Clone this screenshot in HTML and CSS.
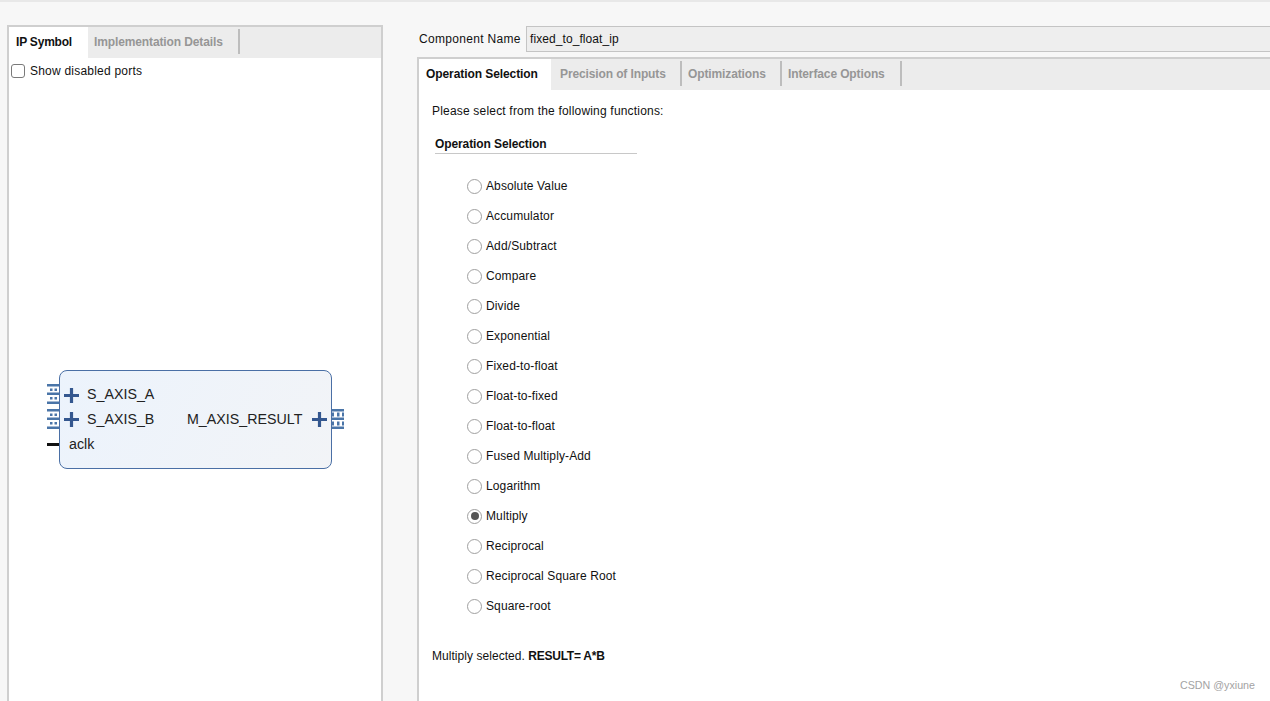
FILE: index.html
```html
<!DOCTYPE html>
<html lang="en">
<head>
<meta charset="utf-8">
<title>Customize IP</title>
<link rel="stylesheet" href="styles.css">
</head>
<body>
<div class="app">
  <section class="left-panel">
    <div class="tabbar left-tabbar">
      <div class="tab active first">IP Symbol</div>
      <div class="tab impl">Implementation Details</div>
    </div>
    <div class="left-body">
      <label class="check-row"><span class="checkbox"></span>Show disabled ports</label>
      <div class="canvas">
        <div class="port-icon bus a"><svg width="12" height="20" viewBox="0 0 12 20"><use href="#bus-left"/></svg></div>
        <div class="port-icon bus b"><svg width="12" height="20" viewBox="0 0 12 20"><use href="#bus-left"/></svg></div>
        <div class="clk-line"></div>
        <div class="block"></div>
        <svg class="plus p1" width="15" height="15" viewBox="0 0 16 16"><use href="#plus"/></svg>
        <svg class="plus p2" width="15" height="15" viewBox="0 0 16 16"><use href="#plus"/></svg>
        <svg class="plus p3" width="15" height="15" viewBox="0 0 16 16"><use href="#plus"/></svg>
        <span class="sig s1">S_AXIS_A</span>
        <span class="sig s2">S_AXIS_B</span>
        <span class="sig s3">aclk</span>
        <span class="sig s4">M_AXIS_RESULT</span>
        <div class="port-icon bus c"><svg width="12" height="20" viewBox="0 0 12 20"><use href="#bus-right"/></svg></div>
      </div>
    </div>
  </section>
  <main class="right">
    <div class="name-row">
      <span class="name-label">Component Name</span>
      <div class="name-input">fixed_to_float_ip</div>
    </div>
    <section class="right-panel">
      <div class="tabbar right-tabbar">
        <div class="tab active op">Operation Selection</div>
        <div class="tab prec">Precision of Inputs</div>
        <div class="tab opt">Optimizations</div>
        <div class="tab intf">Interface Options</div>
      </div>
      <div class="right-body">
        <p class="intro">Please select from the following functions:</p>
        <h2 class="group-title">Operation Selection</h2>
        <ul class="radios">
          <li><span class="radio"></span>Absolute Value</li>
          <li><span class="radio"></span>Accumulator</li>
          <li><span class="radio"></span>Add/Subtract</li>
          <li><span class="radio"></span>Compare</li>
          <li><span class="radio"></span>Divide</li>
          <li><span class="radio"></span>Exponential</li>
          <li><span class="radio"></span>Fixed-to-float</li>
          <li><span class="radio"></span>Float-to-fixed</li>
          <li><span class="radio"></span>Float-to-float</li>
          <li><span class="radio"></span>Fused Multiply-Add</li>
          <li><span class="radio"></span>Logarithm</li>
          <li><span class="radio on"></span>Multiply</li>
          <li><span class="radio"></span>Reciprocal</li>
          <li><span class="radio"></span>Reciprocal Square Root</li>
          <li><span class="radio"></span>Square-root</li>
        </ul>
        <p class="result">Multiply selected. <b>RESULT= A*B</b></p>
      </div>
    </section>
  </main>
</div>
<div class="watermark">CSDN @yxiune</div>
<svg class="defs" width="0" height="0">
  <defs>
    <g id="bus-left" fill="#4a75a8">
      <path d="M0 0h12v2.500H0zM0 8.500h12v2.500H0zM0 17.500h12v2.500H0z"/>
      <path d="M3 4.500h2.500v2.500H3zM7.500 4.500h2.500v2.500H7.500zM3 13h2.500v2.500H3zM7.500 13h2.500v2.500H7.500z"/>
    </g>
    <g id="bus-right" fill="#4a75a8">
      <path d="M0 0h12v2.500H0zM0 8.500h12v2.500H0zM0 17.500h12v2.500H0z"/>
      <path d="M0 3.500h2v4H0zM5 3.500h2.500v4H5zM10 3.500h2v4h-2zM0 12.500h2v4H0zM5 12.500h2.500v4H5zM10 12.500h2v4h-2z"/>
    </g>
    <path id="plus" d="M6.300 0h3.400v6.300H16v3.400H9.700V16H6.300V9.700H0V6.300h6.300z" fill="#34578f"/>
  </defs>
</svg>
</body>
</html>
```
FILE: styles.css
```css
* { box-sizing: border-box; }
html, body { margin: 0; height: 100%; }
body {
  background: #f7f7f7;
  border-top: 2px solid #e8e8e8;
  font: 12px "Liberation Sans", Arial, sans-serif;
  color: #111;
  overflow: hidden;
  position: relative;
}
.app {
  display: flex;
  height: 699px;
  padding: 23px 0 0 7px;
}
.left-panel {
  width: 376px;
  flex: none;
  border: 2px solid #cfcfcf;
  border-bottom: 0;
  display: flex;
  flex-direction: column;
  background: #fff;
}
.tabbar {
  display: flex;
  background: #ececec;
  flex: none;
  font-weight: bold;
  color: #969696;
  letter-spacing: -0.12px;
}
.left-tabbar { height: 31px; }
.tab {
  display: flex;
  align-items: center;
  height: 100%;
}
.tab.active { background: #fff; color: #111; padding-bottom: 2px; letter-spacing: -0.08px; }
.tab.first { width: 79px; padding-left: 7px; letter-spacing: -0.2px; }
.impl {
  width: 152px;
  padding-left: 6px;
  height: 25px;
  margin-top: 2px;
  border-right: 2px solid #bdbdbd;
}
.left-body { flex: 1; display: flex; flex-direction: column; }
.check-row {
  display: flex;
  align-items: center;
  gap: 5px;
  padding: 4px 0 0 2px;
  height: 22px;
  letter-spacing: 0.22px;
}
.checkbox {
  width: 14px;
  height: 14px;
  border: 1px solid #7a7a7a;
  border-radius: 3px;
  background: #fff;
}
.canvas { position: relative; flex: 1; }
.block {
  position: absolute;
  left: 50px;
  top: 290px;
  width: 273px;
  height: 99px;
  border: 1px solid #4a6fa5;
  border-radius: 8px;
  background: linear-gradient(115deg, #ecf3fc, #f2f4f7);
}
.port-icon { position: absolute; display: flex; }
.bus.a { left: 38px; top: 304px; }
.bus.b { left: 38px; top: 329px; }
.bus.c { left: 323px; top: 329px; }
.clk-line {
  position: absolute;
  left: 38px;
  top: 363px;
  width: 12px;
  height: 3px;
  background: #111;
}
.plus { position: absolute; }
.p1 { left: 55px; top: 308px; }
.p2 { left: 55px; top: 332px; }
.p3 { left: 303px; top: 332px; }
.sig { position: absolute; font-size: 14.25px; line-height: 17px; color: #222; }
.s1 { left: 78px; top: 306px; }
.s2 { left: 78px; top: 331px; }
.s3 { left: 60px; top: 356px; }
.s4 { left: 178px; top: 331px; }
.right {
  flex: 1;
  min-width: 0;
  margin-left: 34px;
  display: flex;
  flex-direction: column;
}
.name-row {
  display: flex;
  align-items: center;
  height: 26px;
  margin-top: 1px;
  padding-left: 2px;
}
.name-label { width: 107px; flex: none; letter-spacing: 0.32px; }
.name-input {
  flex: 1;
  height: 26px;
  line-height: 24px;
  padding-left: 3px;
  letter-spacing: 0.08px;
  background: #eeeeee;
  border: 1px solid #c4c4c4;
  border-right: 0;
}
.right-panel {
  flex: 1;
  margin-top: 5px;
  border-top: 2px solid #cfcfcf;
  border-left: 2px solid #cfcfcf;
  display: flex;
  flex-direction: column;
  background: #fff;
}
.right-tabbar { height: 31px; }
.op { width: 132px; padding-left: 7px; }
.prec, .opt, .intf {
  height: 25px;
  margin-top: 2px;
  border-right: 2px solid #bdbdbd;
}
.prec { width: 131px; padding-left: 9px; }
.opt { width: 100px; padding-left: 6px; }
.intf { width: 120px; padding-left: 6px; }
.right-body { flex: 1; padding: 14px 0 0 13px; }
.intro { margin: 0; line-height: 14px; letter-spacing: 0.19px; }
.group-title {
  margin: 19px 0 0 3px;
  width: 202px;
  height: 17px;
  font-size: 12px;
  line-height: 15px;
  font-weight: bold;
  letter-spacing: -0.1px;
  border-bottom: 1px solid #c8c8c8;
}
.radios {
  list-style: none;
  margin: 17px 0 0;
  padding: 0 0 0 35px;
  letter-spacing: 0.12px;
}
.radios li {
  display: flex;
  align-items: center;
  gap: 4px;
  height: 30px;
}
.radio {
  width: 15px;
  height: 15px;
  border: 1.5px solid #a0a0a0;
  border-radius: 50%;
  background: #fff;
  display: flex;
  align-items: center;
  justify-content: center;
}
.radio.on::after {
  content: "";
  width: 8px;
  height: 8px;
  border-radius: 50%;
  background: #555;
}
.result { margin: 28px 0 0; line-height: 14px; letter-spacing: 0.05px; }
.result b { letter-spacing: -0.25px; }
.watermark {
  position: absolute;
  right: 15px;
  bottom: 10px;
  font-size: 10.7px;
  color: #a3a3a3;
}
.defs { position: absolute; }
```
